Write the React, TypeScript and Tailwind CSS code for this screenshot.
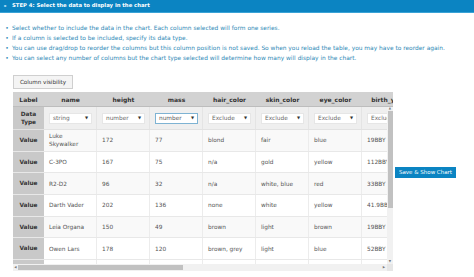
import React from 'react';

const cols = ['name', 'height', 'mass', 'hair_color', 'skin_color', 'eye_color', 'birth_year'];
const types = ['string', 'number', 'number', 'Exclude', 'Exclude', 'Exclude', 'Exclude'];
const rows = [
  ['Luke\nSkywalker', '172', '77', 'blond', 'fair', 'blue', '19BBY'],
  ['C-3PO', '167', '75', 'n/a', 'gold', 'yellow', '112BBY'],
  ['R2-D2', '96', '32', 'n/a', 'white, blue', 'red', '33BBY'],
  ['Darth Vader', '202', '136', 'none', 'white', 'yellow', '41.9BBY'],
  ['Leia Organa', '150', '49', 'brown', 'light', 'brown', '19BBY'],
  ['Owen Lars', '178', '120', 'brown, grey', 'light', 'blue', '52BBY'],
];

const notes = [
  'Select whether to include the data in the chart. Each column selected will form one series.',
  'If a column is selected to be included, specify its data type.',
  'You can use drag/drop to reorder the columns but this column position is not saved. So when you reload the table, you may have to reorder again.',
  'You can select any number of columns but the chart type selected will determine how many will display in the chart.',
];

const App = () => {
  return (
    <div className="w-[474px] h-[277px] bg-white overflow-hidden font-['DejaVu_Sans',sans-serif]">
      {/* Step header */}
      <div className="h-[13px] bg-[#0b84c2] border-b border-[#3aa3d6] flex items-center text-white text-[5.3px] font-bold">
        <span className="w-[10px] text-center text-[#9fd3ef] text-[4px]">▪</span>
        <span className="ml-[2px]">STEP 4: Select the data to display in the chart</span>
      </div>

      <div className="mt-[10px] flex flex-col text-[5.9px] leading-[10px] text-[#2e89b6]">
        {notes.map((n) => (
          <div key={n} className="flex whitespace-nowrap">
            <span className="w-[12px] text-center pl-[2px]">•</span>
            <span>{n}</span>
          </div>
        ))}
      </div>

      <div className="pl-[13px] mt-[12px] flex flex-col items-start">
        <button className="block h-[14px] w-[60px] border border-[#cfcfcf] bg-[#f4f4f4] text-[5.6px] text-[#333]">
          Column visibility
        </button>

        <div className="flex items-start mt-[3px]">
          {/* Table */}
          <div className="w-[380px] text-[5.8px] text-[#555]">
            {/* header row */}
            <div className="flex h-[15px] bg-[#d2d2d2] overflow-hidden font-bold text-[6px] text-[#333] border-b border-[#bdbdbd]">
              <div className="w-[31px] shrink-0 flex items-center justify-center">Label</div>
              {cols.map((c) => (
                <div key={c} className="w-[53px] shrink-0 flex items-center justify-center">{c}</div>
              ))}
            </div>

            <div className="flex h-[157px]">
              <div className="w-[374px] overflow-hidden">
                {/* data type row */}
                <div className="flex h-[23px] bg-[#efefef] border-b border-[#e2e2e2]">
                  <div className="w-[31px] shrink-0 bg-[#c9c9c9] flex items-center justify-center text-center font-bold text-[#333] leading-[8px]">
                    Data<br />Type
                  </div>
                  {types.map((t, i) => (
                    <div key={i} className="w-[53px] shrink-0 flex items-center pl-[5px] border-r border-[#e4e4e4]">
                      <div
                        className={
                          i === 2
                            ? 'w-[43px] h-[11px] shrink-0 bg-white border border-[#7eb3d3] flex items-center justify-between px-[3px] text-[#555]'
                            : 'w-[43px] h-[11px] shrink-0 bg-white border border-[#e6e6e6] flex items-center justify-between px-[3px] text-[#666]'
                        }
                      >
                        <span>{t}</span>
                        <span className="text-[4px] text-[#333]">▼</span>
                      </div>
                    </div>
                  ))}
                </div>

                {rows.map((r, ri) => (
                  <div
                    key={ri}
                    className={
                      ri % 2 === 0
                        ? 'flex h-[21.7px] bg-[#f9f9f9] border-b border-[#e8e8e8]'
                        : 'flex h-[21.7px] bg-white border-b border-[#e8e8e8]'
                    }
                  >
                    <div className="w-[31px] shrink-0 bg-[#c9c9c9] flex items-center justify-center font-bold text-[#333]">
                      Value
                    </div>
                    {r.map((v, ci) => (
                      <div
                        key={ci}
                        className="w-[53px] shrink-0 flex items-center pl-[5px] border-r border-[#ececec] whitespace-pre leading-[8px]"
                      >
                        {v}
                      </div>
                    ))}
                  </div>
                ))}
                <div className="flex h-[10px] bg-white">
                  <div className="w-[31px] shrink-0 bg-[#c9c9c9]" />
                  {cols.map((c) => (
                    <div key={c} className="w-[53px] shrink-0 border-r border-[#ececec]" />
                  ))}
                </div>
              </div>

              {/* vertical scrollbar */}
              <div className="w-[6px] bg-[#f1f1f1] flex flex-col items-center">
                <span className="text-[3px] leading-[3px] text-[#777]">▲</span>
                <div className="w-[5px] h-[97px] bg-[#c1c1c1] mt-[1px]" />
                <div className="flex-1" />
                <span className="text-[3px] leading-[3px] text-[#777] mb-[1px]">▼</span>
              </div>
            </div>

            {/* horizontal scrollbar */}
            <div className="flex h-[7px]">
              <div className="w-[374px] bg-[#f1f1f1] flex items-center">
                <span className="w-[5px] text-center text-[3px] text-[#777]">◀</span>
                <div className="w-[165px] h-[5px] bg-[#c1c1c1]" />
                <div className="flex-1" />
                <span className="w-[6px] text-center text-[3px] text-[#777]">▶</span>
              </div>
              <div className="w-[6px] bg-[#e6e6e6]" />
            </div>
          </div>

          <button className="block ml-[2px] mt-[75px] h-[11px] w-[61px] bg-[#0b84c2] text-white text-[5.5px]">
            Save &amp; Show Chart
          </button>
        </div>
      </div>
    </div>
  );
};

export default App;
